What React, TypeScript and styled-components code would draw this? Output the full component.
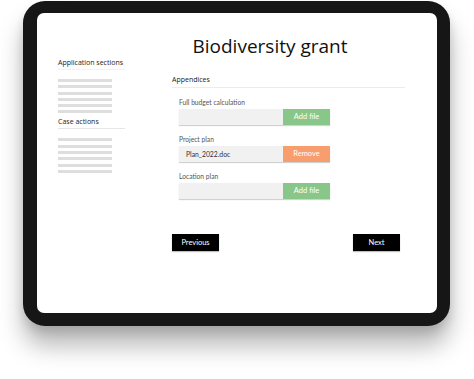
import React from "react";
import styled, { createGlobalStyle } from "styled-components";

const Global = createGlobalStyle`
  html, body { margin: 0; padding: 0; background: #ffffff; }
  body { width: 474px; height: 379px; overflow: hidden; font-family: "Open Sans", "Liberation Sans", sans-serif; }
  #root { padding: 1px 0 0 23px; }
`;

const Frame = styled.div`
  width: 427px;
  height: 325px;
  box-sizing: border-box;
  padding: 12px 13px 13px 14px;
  background: #161616;
  border-radius: 22px;
  box-shadow: 0 20px 24px rgba(0, 0, 0, 0.28), 0 6px 10px rgba(0, 0, 0, 0.12);
`;

const Screen = styled.div`
  width: 400px;
  height: 300px;
  box-sizing: border-box;
  background: #ffffff;
  border-radius: 7px;
  padding: 21px 32px 0 21px;
  display: grid;
  grid-template-columns: 67px 233px;
  grid-template-rows: auto 1fr;
  column-gap: 47px;
  align-content: start;
`;

const Title = styled.h1`
  grid-column: 1 / 3;
  margin: 0;
  padding-left: 87px;
  font-family: "Open Sans", sans-serif;
  font-weight: 400;
  font-size: 19px;
  line-height: 24px;
  color: #111;
  text-align: center;
  width: 250px;
  box-sizing: content-box;
`;

const Sidebar = styled.aside`
  display: flex;
  flex-direction: column;
`;

const SideHeading = styled.div<{ $strong?: boolean; $top?: number }>`
  font-family: "Open Sans", sans-serif;
  font-size: 7px;
  line-height: 10px;
  color: #222;
  margin-top: ${(p) => p.$top ?? 0}px;
  border-bottom: 1px solid ${(p) => (p.$strong ? "#e6e6e6" : "#f3f3f3")};
  padding-bottom: 1px;
`;

const Bars = styled.div`
  display: flex;
  flex-direction: column;
  gap: 3.3px;
  width: 54px;
  margin-top: 9px;
`;

const Bar = styled.div`
  height: 3px;
  background: #dedede;
`;

const Main = styled.main`
  display: flex;
  flex-direction: column;
`;

const SectionHeading = styled.div`
  margin-top: 17px;
  font-family: "Open Sans", sans-serif;
  font-size: 7px;
  line-height: 10px;
  color: #222;
  padding-bottom: 2px;
  border-bottom: 1px solid #ececec;
`;

const Fields = styled.div`
  display: flex;
  flex-direction: column;
  gap: 10px;
  padding-left: 7px;
  margin-top: 10px;
`;

const Field = styled.div`
  display: flex;
  flex-direction: column;
  gap: 3px;
`;

const Label = styled.div`
  font-family: "Lato", sans-serif;
  font-size: 6.7px;
  line-height: 8px;
  color: #555;
`;

const InputRow = styled.div`
  display: flex;
  width: 151px;
  height: 16px;
  box-shadow: 0 1px 1px rgba(0, 0, 0, 0.18);
`;

const FileBox = styled.div`
  width: 104px;
  background: #f1f1f1;
  font-family: "Lato", sans-serif;
  font-size: 6.8px;
  line-height: 16px;
  color: #333;
  padding-left: 7px;
  box-sizing: border-box;
`;

const FileButton = styled.div<{ $kind: "add" | "remove" }>`
  width: 47px;
  background: ${(p) => (p.$kind === "add" ? "#89c68a" : "#f79d6e")};
  color: #ffffff;
  font-family: "Lato", sans-serif;
  font-size: 7.5px;
  line-height: 16px;
  text-align: center;
`;

const Nav = styled.div`
  display: flex;
  justify-content: space-between;
  width: 228px;
  margin-top: 35px;
`;

const NavButton = styled.div`
  width: 47px;
  height: 17px;
  background: #000;
  color: #fff;
  font-family: "Lato", sans-serif;
  font-size: 7.5px;
  line-height: 17px;
  text-align: center;
  box-shadow: 0 1px 1px rgba(0, 0, 0, 0.25);
`;

const fields = [
  { label: "Full budget calculation", file: "", kind: "add" as const },
  { label: "Project plan", file: "Plan_2022.doc", kind: "remove" as const },
  { label: "Location plan", file: "", kind: "add" as const },
];

export default function App() {
  return (
    <>
      <Global />
      <Frame>
        <Screen>
          <Title>Biodiversity grant</Title>
          <Sidebar>
            <SideHeading>Application sections</SideHeading>
            <Bars>
              {Array.from({ length: 6 }).map((_, i) => (
                <Bar key={i} />
              ))}
            </Bars>
            <SideHeading $strong $top={4}>Case actions</SideHeading>
            <Bars>
              {Array.from({ length: 6 }).map((_, i) => (
                <Bar key={i} />
              ))}
            </Bars>
          </Sidebar>
          <Main>
            <SectionHeading>Appendices</SectionHeading>
            <Fields>
              {fields.map((f) => (
                <Field key={f.label}>
                  <Label>{f.label}</Label>
                  <InputRow>
                    <FileBox>{f.file}</FileBox>
                    <FileButton $kind={f.kind}>{f.kind === "add" ? "Add file" : "Remove"}</FileButton>
                  </InputRow>
                </Field>
              ))}
            </Fields>
            <Nav>
              <NavButton>Previous</NavButton>
              <NavButton>Next</NavButton>
            </Nav>
          </Main>
        </Screen>
      </Frame>
    </>
  );
}
